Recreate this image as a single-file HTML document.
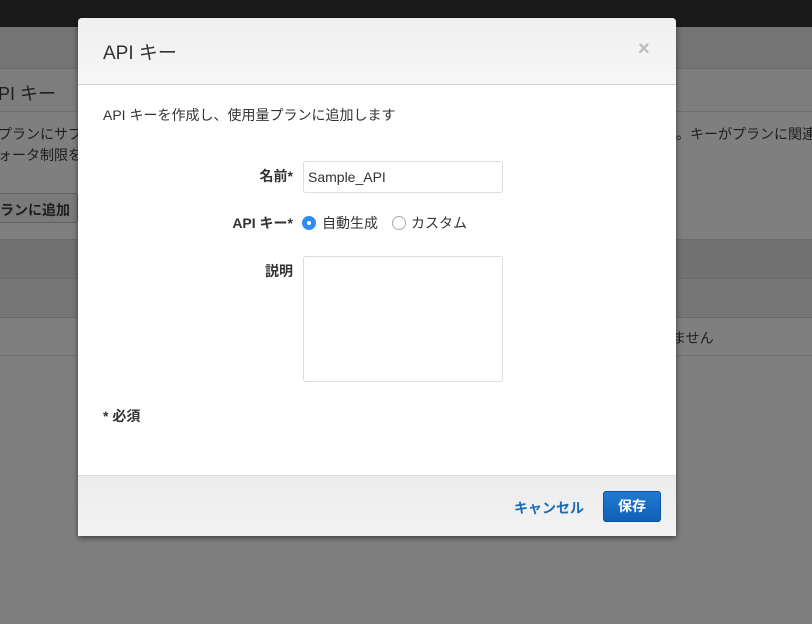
<!DOCTYPE html>
<html><head><meta charset="utf-8"><style>
*{box-sizing:border-box;margin:0;padding:0}
body{width:812px;height:624px;overflow:hidden;background:#7f7f7f;font-family:"Liberation Sans","Noto Sans CJK JP",sans-serif;color:#333;position:relative}
.abs{position:absolute;white-space:nowrap}
.bgtext{color:#1e1e1e;font-size:14px}
</style></head><body>
<div class="abs" style="left:0;top:0;width:812px;height:27px;background:#1a1a1a"></div>
<div class="abs" style="left:0;top:27px;width:812px;height:42px;background:#747474;border-bottom:1px solid #6a6a6a"></div>
<div class="abs" style="left:0;top:69px;width:812px;height:43px;background:#7d7d7d;border-bottom:1px solid #6e6e6e"></div>
<div class="abs bgtext" style="left:-2px;top:80px;font-size:18px">PI キー</div>
<div class="abs bgtext" style="left:-2px;top:124px">プランにサブス</div>
<div class="abs bgtext" style="left:-2px;top:145px">ォータ制限を</div>
<div class="abs bgtext" style="left:676px;top:124px">。キーがプランに関連</div>
<div class="abs" style="left:-4px;top:193px;width:82px;height:30px;background:#7a7a7a;border:1px solid #5f5f5f;border-radius:3px"></div>
<div class="abs bgtext" style="left:0;top:200px;font-weight:bold">ランに追加</div>
<div class="abs" style="left:0;top:239px;width:812px;height:40px;background:#727272;border-top:1px solid #6b6b6b;border-bottom:1px solid #6b6b6b"></div>
<div class="abs" style="left:0;top:279px;width:812px;height:39px;background:#767676;border-bottom:1px solid #6b6b6b"></div>
<div class="abs" style="left:0;top:355px;width:812px;height:1px;background:#6e6e6e"></div>
<div class="abs bgtext" style="left:672px;top:328px">ません</div>

<div class="abs" style="left:78px;top:18px;width:598px;height:518px;background:#fff;border-radius:4px 4px 0 0;box-shadow:0 2px 6px rgba(0,0,0,.5);overflow:hidden">
 <div style="height:67px;background:linear-gradient(#efefef,#f7f7f7);border-bottom:1px solid #cfcfcf;position:relative">
  <div class="abs" style="left:25px;top:20px;font-size:19px;color:#333">API キー</div>
  <div class="abs" style="left:560px;top:20px;font-size:20px;color:#bbb;font-weight:bold">×</div>
 </div>
 <div class="abs" style="left:25px;top:87px;font-size:14px;color:#333">API キーを作成し、使用量プランに追加します</div>
 <div class="abs" style="left:0;top:148px;width:215px;text-align:right;font-size:14px;font-weight:bold">名前*</div>
 <div class="abs" style="left:225px;top:143px;width:200px;height:32px;border:1px solid #ddd;border-radius:3px;font-size:14px;padding:7px 4px">Sample_API</div>
 <div class="abs" style="left:0;top:195px;width:215px;text-align:right;font-size:14px;font-weight:bold">API キー*</div>
 <div class="abs" style="left:224px;top:198px;width:14px;height:14px;border-radius:50%;background:#2f8cf0"><div style="margin:5px;width:4px;height:4px;border-radius:50%;background:#fff"></div></div>
 <div class="abs" style="left:244px;top:195px;font-size:14px">自動生成</div>
 <div class="abs" style="left:314px;top:198px;width:14px;height:14px;border-radius:50%;border:1px solid #aaa"></div>
 <div class="abs" style="left:333px;top:195px;font-size:14px">カスタム</div>
 <div class="abs" style="left:0;top:243px;width:215px;text-align:right;font-size:14px;font-weight:bold">説明</div>
 <div class="abs" style="left:225px;top:238px;width:200px;height:126px;border:1px solid #ddd;border-radius:3px"></div>
 <div class="abs" style="left:25px;top:388px;font-size:14px;font-weight:bold">* 必須</div>
 <div class="abs" style="left:0;top:457px;width:598px;height:61px;background:linear-gradient(#ececec,#f3f3f3);border-top:1px solid #ddd">
  <div class="abs" style="left:436px;top:22px;font-size:14px;font-weight:bold;color:#1a6bb8">キャンセル</div>
  <div class="abs" style="left:525px;top:15px;width:58px;height:31px;border-radius:3px;background:linear-gradient(#1f7ad3,#1060b5);border:1px solid #0d54a0;color:#fff;font-size:14px;font-weight:bold;text-align:center;line-height:29px">保存</div>
 </div>
</div>
</body></html>
